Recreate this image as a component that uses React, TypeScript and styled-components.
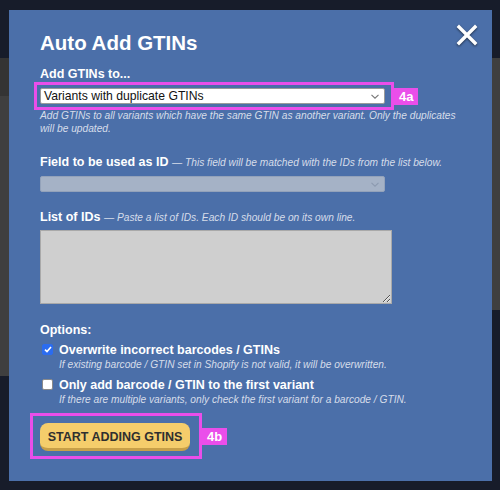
import React from 'react';
import styled, { createGlobalStyle } from 'styled-components';

const GlobalStyle = createGlobalStyle`
  html, body {
    margin: 0;
    padding: 0;
    background: #171c2a;
    font-family: 'Liberation Sans', Arial, sans-serif;
  }
`;

const MAGENTA = '#ea4eea';
const NOTE = '#d6dde9';

const Backdrop = styled.div`
  width: 500px;
  height: 490px;
  box-sizing: border-box;
  padding: 10px 8px 9px 9px;
  display: flex;
  background-color: #171c2a;
  background-image:
    linear-gradient(#343434, #343434),
    linear-gradient(#3f3f3f, #3f3f3f),
    linear-gradient(#3f3f3f, #3f3f3f),
    linear-gradient(#5a4a22, #5a4a22);
  background-repeat: no-repeat;
  background-size: 9px 38px, 9px 280px, 8px 252px, 8px 55px;
  background-position: 0 58px, 0 96px, 492px 58px, 492px 245px;
`;

const Modal = styled.div`
  flex: 1;
  background: #4b6fa9;
  padding: 20px 14px 0 31px;
  color: #fff;
  display: flex;
  flex-direction: column;
  white-space: nowrap;
`;

const Header = styled.div`
  display: flex;
  justify-content: space-between;
  align-items: flex-start;
`;

const Title = styled.h1`
  margin: 0;
  font-size: 20.5px;
  line-height: 26px;
  font-weight: 700;
`;

const CloseButton = styled.button`
  border: 0;
  background: none;
  padding: 0;
  margin-top: -6px;
  width: 22px;
  height: 22px;
  cursor: pointer;
  filter: drop-shadow(0 1px 1px rgba(0, 0, 0, 0.6));
`;

const Label = styled.div<{ $top: number }>`
  margin-top: ${p => p.$top}px;
  font-size: 12.5px;
  line-height: 17px;
  font-weight: 700;
`;

const Aside = styled.span`
  font-size: 10.2px;
  font-weight: 400;
  font-style: italic;
  color: ${NOTE};
`;

const Note = styled.div`
  font-size: 10.2px;
  line-height: 12.5px;
  font-style: italic;
  color: ${NOTE};
`;

const Marked = styled.div<{ $top?: number; $left?: number }>`
  display: flex;
  align-items: center;
  margin-top: ${p => p.$top ?? 0}px;
  margin-left: ${p => p.$left ?? 0}px;
`;

const MarkBox = styled.div<{ $pad: string }>`
  border: 3px solid ${MAGENTA};
  padding: ${p => p.$pad};
  display: flex;
`;

const Tag = styled.span`
  background: ${MAGENTA};
  color: #fff;
  font-size: 13px;
  font-weight: 700;
  line-height: 17px;
  padding: 0 5px;
  align-self: center;
`;

const SelectBox = styled.div<{ $disabled?: boolean }>`
  box-sizing: border-box;
  width: 345px;
  height: 16px;
  display: flex;
  align-items: center;
  justify-content: space-between;
  padding: 0 5px 0 3px;
  border: 1px solid ${p => (p.$disabled ? '#93a2ba' : '#9a9a9a')};
  border-radius: 2px;
  background: ${p => (p.$disabled ? '#a5b2c6' : '#fff')};
  color: #111;
  font-size: 12.2px;
  line-height: 14px;
`;

const Chevron: React.FC<{ color: string }> = ({ color }) => (
  <svg width="8" height="5" viewBox="0 0 8 5">
    <path d="M0.5 0.8 L4 4.2 L7.5 0.8" fill="none" stroke={color} strokeWidth="1.1" />
  </svg>
);

const TextArea = styled.textarea`
  display: block;
  box-sizing: border-box;
  width: 352px;
  height: 74px;
  margin-top: 4px;
  border: 1px solid #a9a9a9;
  background: #cfcfcf;
  resize: vertical;
  font-family: inherit;
`;

const Option = styled.div<{ $top: number }>`
  display: flex;
  gap: 6px;
  margin-top: ${p => p.$top}px;
  padding-left: 2px;
`;

const Check = styled.span<{ $checked?: boolean }>`
  flex: none;
  box-sizing: border-box;
  width: 11px;
  height: 11px;
  margin-top: 2px;
  border-radius: 2px;
  background: ${p => (p.$checked ? '#2b6cf0' : '#fff')};
  border: 1px solid ${p => (p.$checked ? '#2b6cf0' : '#8a8a8a')};
  display: flex;
  align-items: center;
  justify-content: center;
`;

const OptionText = styled.div`
  display: flex;
  flex-direction: column;
`;

const StartButton = styled.button`
  box-sizing: border-box;
  width: 150px;
  height: 28px;
  border: 0;
  border-bottom: 3px solid #c79f48;
  border-radius: 8px;
  background: #f5cd6b;
  color: #2f2f2f;
  font-family: inherit;
  font-size: 12.5px;
  font-weight: 700;
  white-space: nowrap;
  padding: 2px 0 0;
  cursor: pointer;
`;

export default function App() {
  return (
    <>
      <GlobalStyle />
      <Backdrop>
        <Modal>
          <Header>
            <Title>Auto Add GTINs</Title>
            <CloseButton aria-label="Close">
              <svg width="22" height="22" viewBox="0 0 22 22">
                <path d="M3 3 L19 19 M19 3 L3 19" stroke="#fff" strokeWidth="3.4" strokeLinecap="square" />
              </svg>
            </CloseButton>
          </Header>

          <Label $top={10}>Add GTINs to...</Label>
          <Marked $top={-1} $left={-6}>
            <MarkBox $pad="3px 6px 3px 3px">
              <SelectBox>
                <span>Variants with duplicate GTINs</span>
                <Chevron color="#777" />
              </SelectBox>
            </MarkBox>
            <Tag>4a</Tag>
          </Marked>
          <Note>
            Add GTINs to all variants which have the same GTIN as another variant. Only the duplicates
            <br />
            will be updated.
          </Note>

          <Label $top={19}>
            Field to be used as ID <Aside>— This field will be matched with the IDs from the list below.</Aside>
          </Label>
          <Marked $top={5}>
            <SelectBox $disabled>
              <span />
              <Chevron color="#8c9ab0" />
            </SelectBox>
          </Marked>

          <Label $top={17}>
            List of IDs <Aside>— Paste a list of IDs. Each ID should be on its own line.</Aside>
          </Label>
          <TextArea />

          <Label $top={18}>Options:</Label>
          <Option $top={3}>
            <Check $checked>
              <svg width="8" height="7" viewBox="0 0 8 7">
                <path d="M1 3.6 L3 5.6 L7 1" fill="none" stroke="#fff" strokeWidth="1.6" />
              </svg>
            </Check>
            <OptionText>
              <Label $top={0}>Overwrite incorrect barcodes / GTINs</Label>
              <Note>If existing barcode / GTIN set in Shopify is not valid, it will be overwritten.</Note>
            </OptionText>
          </Option>
          <Option $top={5}>
            <Check />
            <OptionText>
              <Label $top={0}>Only add barcode / GTIN to the first variant</Label>
              <Note>If there are multiple variants, only check the first variant for a barcode / GTIN.</Note>
            </OptionText>
          </Option>

          <Marked $top={7} $left={-10}>
            <MarkBox $pad="7px 9px 5px 7px">
              <StartButton>START ADDING GTINS</StartButton>
            </MarkBox>
            <Tag>4b</Tag>
          </Marked>
        </Modal>
      </Backdrop>
    </>
  );
}
